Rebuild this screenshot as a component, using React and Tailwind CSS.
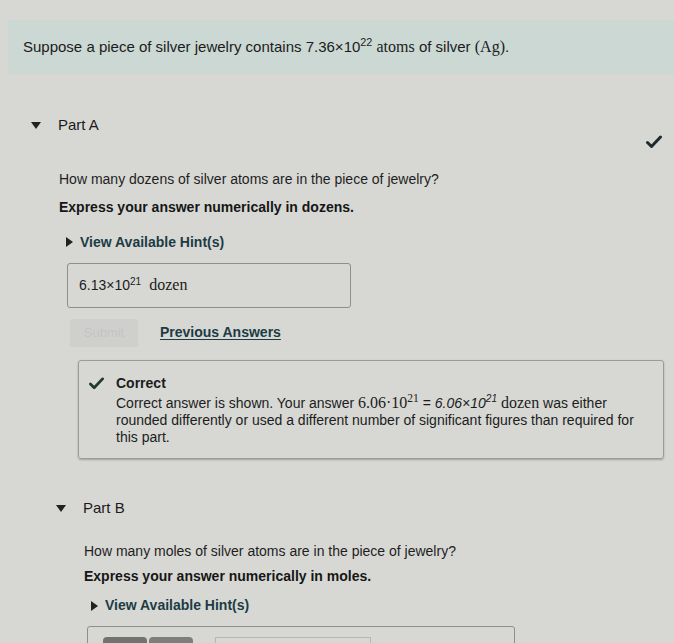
import React from 'react';

const sans = { fontFamily: '"Liberation Sans", Arial, sans-serif' };

const Caret = ({ open, className = '' }) => (
  <svg viewBox="0 0 10 10" className={`w-[10px] h-[10px] ${className}`}>
    {open ? <path d="M0 2 L10 2 L5 9 Z" fill="#222" /> : <path d="M2 0 L9 5 L2 10 Z" fill="#222" />}
  </svg>
);

const Check = ({ className = '', color = '#1f2a30' }) => (
  <svg viewBox="0 0 16 14" className={className}>
    <path d="M1.5 7.5 L5.5 11.5 L14.5 2" fill="none" stroke={color} strokeWidth="3" strokeLinecap="round" strokeLinejoin="round" />
  </svg>
);

// scientific notation, e.g. 7.36×10^22
const Sci = ({ m, e, italic, serif }) => (
  <span className={`leading-none ${italic ? 'italic' : ''} ${serif ? "font-['Liberation_Serif',serif] text-[16px]" : ''}`}>
    {m}
    {serif ? '·' : '×'}10
    <sup className="text-[0.72em]">{e}</sup>
  </span>
);

const Serif = ({ children }) => (
  <span className="font-['Liberation_Serif',serif] text-[16px] leading-none">{children}</span>
);

const HintLink = () => (
  <div className="flex items-center gap-[6px] text-[14px] font-bold text-[#1d3b45]">
    <Caret />
    <span>View Available Hint(s)</span>
  </div>
);

const Part = ({ label, question, unit, indent, tight, children, done }) => (
  <section className={indent}>
    <div className="flex items-center gap-[17px]">
      <Caret open />
      <span className="text-[15px] text-[#1b1b1b]">{label}</span>
    </div>
    {done && (
      <div className="flex justify-end pr-[12px] -mt-[2px]">
        <Check className="w-[16px] h-[14px]" />
      </div>
    )}
    <div className={`pl-[28px] ${tight ? 'mt-[22px]' : 'mt-[20px]'}`}>
      <p className="text-[14px] text-[#1e1e1e]">{question}</p>
      <p className={`text-[14px] font-bold text-[#161616] ${tight ? 'mt-[4px]' : 'mt-[7px]'}`}>
        Express your answer numerically in {unit}.
      </p>
      <div className={`pl-[5px] ${tight ? 'mt-[8px]' : 'mt-[14px]'}`}>
        <HintLink />
      </div>
      {children}
    </div>
  </section>
);

export default function App() {
  return (
    <div style={sans} className="w-[674px] h-[643px] overflow-hidden bg-[#d7d8d4] text-[#1c1c1c]">
      <div className="pt-[20px] pl-[8px]">
        <div className="bg-[#cbd8d3] h-[54px] flex items-center pl-[15px] text-[15px]">
          <span>
            Suppose a piece of silver jewelry contains <Sci m="7.36" e="22" /> <Serif>atoms</Serif> of silver{' '}
            <Serif>(Ag)</Serif>.
          </span>
        </div>
      </div>

      <div className="mt-[40px] pl-[31px]">
        <Part label="Part A" question="How many dozens of silver atoms are in the piece of jewelry?" unit="dozens" done>
          <div className="mt-[10px] w-[284px] h-[45px] ml-[8px] border border-[#8c8f8c] rounded-[3px] flex items-center pl-[11px] text-[14px]">
            <Sci m="6.13" e="21" />
            <span className="ml-[8px]"><Serif>dozen</Serif></span>
          </div>
          <div className="mt-[11px] ml-[11px] flex items-center gap-[22px]">
            <button className="w-[68px] h-[28px] bg-[#cfd0cd] text-[#c3c5c2] text-[13px] rounded-[2px]">Submit</button>
            <span className="text-[14px] font-bold text-[#1d3b45] underline underline-offset-2">Previous Answers</span>
          </div>
          <div className="mt-[13px] ml-[19px] mr-[10px] border border-[#9a9c99] rounded-[3px] shadow-[0_1px_2px_rgba(0,0,0,0.25)] pl-[10px] pr-[20px] pt-[14px] pb-[12px] flex gap-[12px]">
            <Check className="w-[15px] h-[13px] mt-[2px] shrink-0" color="#1f3b2a" />
            <div className="text-[14px] leading-[17px] text-[#1c1c1c]">
              <div className="font-bold">Correct</div>
              <p className="mt-[3px]">
                Correct answer is shown. Your answer <Sci m="6.06" e="21" serif /> = <Sci m="6.06" e="21" italic />{' '}
                <Serif>dozen</Serif> was either rounded differently or used a different number of significant figures
                than required for this part.
              </p>
            </div>
          </div>
        </Part>

        <div className="mt-[38px]">
          <Part
            label="Part B"
            question="How many moles of silver atoms are in the piece of jewelry?"
            unit="moles"
            indent="pl-[25px]"
            tight
          >
            <div className="mt-[10px] ml-[3px] w-[428px] h-[40px] border border-[#8c8f8c] rounded-[3px] pt-[10px] pl-[15px] flex gap-[2px]">
              <div className="w-[44px] h-[20px] rounded-t-[4px] bg-[#6f7472]" />
              <div className="w-[44px] h-[20px] rounded-t-[4px] bg-[#7b807e]" />
              <div className="ml-[20px] w-[156px] h-[20px] border-t border-l border-r border-[#b5b7b4]" />
            </div>
          </Part>
        </div>
      </div>
    </div>
  );
}
